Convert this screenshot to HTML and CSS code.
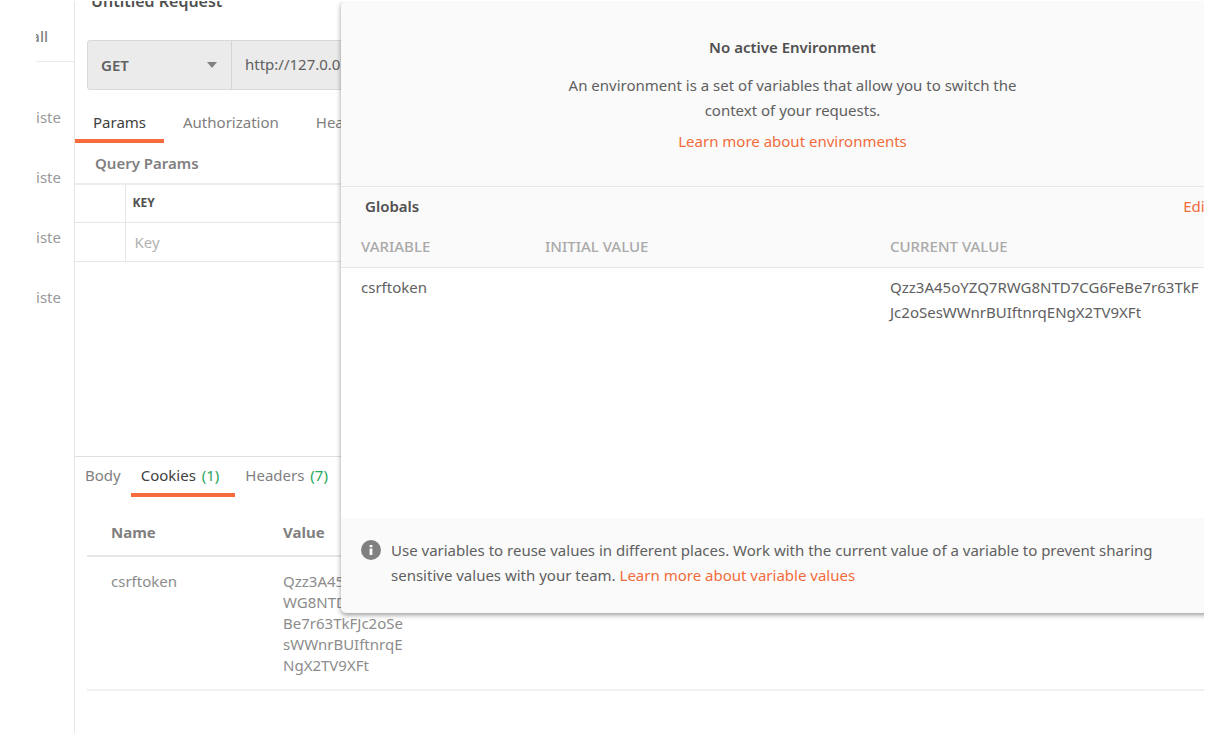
FILE: index.html
```html
<!DOCTYPE html>
<html lang="en">
<head>
    <meta charset="UTF-8">
    <meta name="viewport" content="width=device-width, initial-scale=1.0">
    <title>Untitled Request</title>
    <link rel="stylesheet" href="styles.css">
</head>
<body>
    <div class="app">
        <aside class="sidebar">
            <div class="sidebar-top"><button type="button">all</button></div>
            <ul class="history">
                <li>iste</li>
                <li>iste</li>
                <li>iste</li>
                <li>iste</li>
            </ul>
        </aside>

        <main class="main">
            <section class="request">
                <h1>Untitled Request</h1>
                <div class="url-bar">
                    <button type="button" class="method">GET <span class="caret"></span></button>
                    <input type="text" class="url" aria-label="Request URL" value="http://127.0.0.1:8000/">
                </div>
                <nav class="tabs request-tabs">
                    <button type="button" class="tab active">Params</button>
                    <button type="button" class="tab">Authorization</button>
                    <button type="button" class="tab">Headers</button>
                </nav>
                <h2>Query Params</h2>
                <table class="params">
                    <thead>
                        <tr><th class="check"></th><th>KEY</th></tr>
                    </thead>
                    <tbody>
                        <tr><td class="check"></td><td><input type="text" placeholder="Key" aria-label="Key"></td></tr>
                    </tbody>
                </table>
            </section>

            <section class="response">
                <nav class="tabs response-tabs">
                    <button type="button" class="tab">Body</button>
                    <button type="button" class="tab active">Cookies <span class="count">(1)</span></button>
                    <button type="button" class="tab">Headers <span class="count">(7)</span></button>
                </nav>
                <table class="cookies">
                    <thead>
                        <tr><th class="name">Name</th><th>Value</th></tr>
                    </thead>
                    <tbody>
                        <tr>
                            <td>csrftoken</td>
                            <td>Qzz3A45oYZQ7R<br>WG8NTD7CG6Fe<br>Be7r63TkFJc2oSe<br>sWWnrBUIftnrqE<br>NgX2TV9XFt</td>
                        </tr>
                    </tbody>
                </table>
            </section>

            <div class="popover">
                <section class="environment">
                    <h3>No active Environment</h3>
                    <p>An environment is a set of variables that allow you to switch the context of your requests.</p>
                    <a href="#">Learn more about environments</a>
                </section>
                <div class="globals-head">
                    <h3>Globals</h3>
                    <button type="button" class="edit">Edit</button>
                </div>
                <div class="globals">
                    <table>
                        <thead>
                            <tr><th class="variable">VARIABLE</th><th class="initial">INITIAL VALUE</th><th>CURRENT VALUE</th></tr>
                        </thead>
                        <tbody>
                            <tr>
                                <td>csrftoken</td>
                                <td></td>
                                <td>Qzz3A45oYZQ7RWG8NTD7CG6FeBe7r63TkF<br>Jc2oSesWWnrBUIftnrqENgX2TV9XFt</td>
                            </tr>
                        </tbody>
                    </table>
                </div>
                <footer class="hint">
                    <svg width="20" height="20" viewBox="0 0 20 20" aria-hidden="true">
                        <circle cx="10" cy="10" r="10" fill="#808080"/>
                        <path d="M8.6 5h2.8v2.2H8.6zM8.6 8.4h2.8v6.6H8.6z" fill="#fafafa"/>
                    </svg>
                    <p>Use variables to reuse values in different places. Work with the current value of a variable to prevent sharing sensitive values with your team. <a href="#">Learn more about variable values</a></p>
                </footer>
            </div>
        </main>
    </div>
</body>
</html>
```
FILE: styles.css
```css
* {
    box-sizing: border-box;
}
body {
    margin: 0;
    padding: 1px 17px 8px 36px;
    height: 100vh;
    background-color: #ffffff;
    color: #808080;
    font-family: "Noto Sans", "Open Sans", sans-serif;
    font-size: 15px;
    line-height: 20px;
}
h1, h2, h3, p, ul {
    margin: 0;
    padding: 0;
}
h1, h2, h3 {
    font-size: 15px;
    font-weight: 600;
}
button, input {
    margin: 0;
    padding: 0;
    border: none;
    background: none;
    color: inherit;
    font: inherit;
}
a, .edit {
    color: #f26b3a;
    text-decoration: none;
}
table {
    width: 100%;
    border-collapse: collapse;
    table-layout: fixed;
}
th, td {
    padding: 0;
    text-align: left;
    vertical-align: top;
    font-weight: normal;
}
.app {
    display: flex;
    height: 100%;
    overflow: hidden;
}

/* sidebar */
.sidebar {
    flex: 0 0 39px;
    border-right: 1px solid #e6e6e6;
    overflow: hidden;
}
.sidebar-top {
    display: flex;
    justify-content: flex-end;
    height: 61px;
    padding: 25px 26px 0 0;
    border-bottom: 1px solid #eaeaea;
}
.sidebar-top button {
    height: 20px;
    font-weight: 500;
}
.history {
    padding-top: 25px;
    list-style: none;
}
.history li {
    height: 60px;
    padding: 20px 13px 0 0;
    display: flex;
    justify-content: flex-end;
    color: #999999;
}

/* request */
.main {
    position: relative;
    flex: 1;
    min-width: 0;
    display: flex;
    flex-direction: column;
}
.request {
    flex: 1;
}
.request h1 {
    margin: -10px 0 29px 16px;
    color: #505050;
    font-size: 16px;
}
.url-bar {
    display: flex;
    height: 50px;
    margin: 0 12px;
    border: 1px solid #d9d9d9;
    border-radius: 3px;
    background-color: #ebebeb;
}
.method {
    display: flex;
    align-items: center;
    justify-content: space-between;
    width: 144px;
    padding: 0 14px 0 13px;
    border-right: 1px solid #d4d4d4;
    color: #606060;
    font-weight: 600;
}
.caret {
    border: 5px solid transparent;
    border-top: 6px solid #808080;
    border-bottom: none;
}
.url {
    flex: 1;
    padding: 0 13px 2px;
    color: #606060;
}
.tabs {
    display: flex;
}
.tab {
    height: 40px;
    border-bottom: 4px solid transparent;
}
.tab.active {
    border-color: #f76b3c;
    color: #404040;
}
.count {
    margin: 0 6px 0 2px;
    color: #26a65b;
}
.request-tabs {
    gap: 1px;
    margin-top: 13px;
}
.request-tabs .tab {
    padding: 2px 18px 0;
}
.request h2 {
    padding: 10px 20px;
}
.params {
    border-top: 2px solid #ededed;
}
.params th, .params td {
    height: 39px;
    padding-left: 7px;
    border-bottom: 1px solid #e6e6e6;
    vertical-align: middle;
}
.params th {
    height: 38px;
    color: #505050;
    font-size: 12px;
    font-weight: bold;
}
.params .check {
    width: 50px;
    border-right: 1px solid #e6e6e6;
}
.params input {
    display: block;
    width: 100%;
    padding-left: 2px;
}
.params input::placeholder {
    color: #b3b3b3;
}

/* response */
.response {
    padding-bottom: 42px;
    border-top: 1px solid #e0e0e0;
}
.response-tabs .tab {
    padding: 0 10px;
}
.cookies {
    width: auto;
    min-width: 100%;
    border-left: 12px solid transparent;
}
.cookies th {
    height: 59px;
    padding: 25px 24px 0;
    border-bottom: 2px solid #e6e6e6;
    font-weight: bold;
}
.cookies td {
    padding: 14px 24px 13px;
    border-bottom: 2px solid #f0f0f0;
    color: #8c8c8c;
    line-height: 21px;
}
.cookies .name {
    width: 178px;
}

/* environment quick look */
.popover {
    position: absolute;
    top: 0;
    left: 266px;
    right: -40px;
    border-radius: 5px;
    background-color: #fafafa;
    color: #606060;
    line-height: 25px;
    box-shadow: 0 2px 5px rgba(0, 0, 0, 0.4);
}
.popover h3 {
    color: #505050;
}
.environment {
    height: 185px;
    padding-top: 34px;
    text-align: center;
}
.environment p {
    width: 460px;
    margin: 13px auto 6px;
}
.environment a {
    display: block;
}
.globals-head {
    display: flex;
    justify-content: space-between;
    padding: 7px 34px 8px 24px;
    border-top: 1px solid #e6e6e6;
}
.globals {
    min-height: 291px;
    background-color: #ffffff;
}
.globals th {
    height: 40px;
    padding: 7px 0 0 20px;
    border-bottom: 1px solid #e6e6e6;
    background-color: #fafafa;
    color: #a9a9a9;
    font-weight: 500;
}
.globals td {
    padding: 7px 0 0 20px;
}
.globals .variable {
    width: 184px;
}
.globals .initial {
    width: 345px;
}
.hint {
    display: flex;
    gap: 10px;
    padding: 20px 80px 25px 20px;
}
.hint svg {
    flex: none;
    margin-top: 2px;
}
```
